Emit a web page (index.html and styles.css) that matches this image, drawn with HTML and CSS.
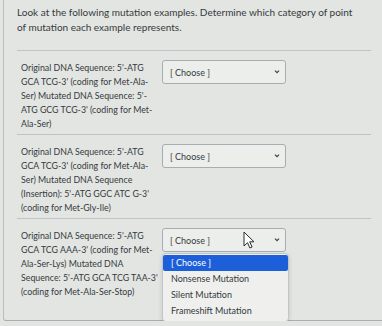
FILE: index.html
```html
<!DOCTYPE html>
<html lang="en">
<head>
  <meta charset="UTF-8" />
  <title>Quiz question</title>
  <meta name="viewport" content="width=device-width, initial-scale=1.0" />
  <link rel="stylesheet" href="styles.css">
</head>
<body>

  <div class="quiz">
    <p class="prompt">Look at the following mutation examples. Determine which category of point of mutation each example represents.</p>

    <div class="row">
      <div class="stem">Original DNA Sequence: 5'-ATG GCA TCG-3' (coding for Met-Ala-Ser) Mutated DNA Sequence: 5'-ATG GCG TCG-3' (coding for Met-Ala-Ser)</div>
      <div class="pick">
        <div class="select">[ Choose ]
          <svg class="chev" viewBox="0 0 8 6" width="7" height="5"><path d="M1 1l3 3 3-3" fill="none" stroke="#3b4046" stroke-width="1.8"/></svg>
        </div>
      </div>
    </div>

    <div class="row">
      <div class="stem">Original DNA Sequence: 5'-ATG GCA TCG-3' (coding for Met-Ala-Ser) Mutated DNA Sequence (Insertion): 5'-ATG GGC ATC G-3' (coding for Met-Gly-Ile)</div>
      <div class="pick">
        <div class="select">[ Choose ]
          <svg class="chev" viewBox="0 0 8 6" width="7" height="5"><path d="M1 1l3 3 3-3" fill="none" stroke="#3b4046" stroke-width="1.8"/></svg>
        </div>
      </div>
    </div>

    <div class="row last">
      <div class="stem">Original DNA Sequence: 5'-ATG GCA TCG AAA-3' (coding for Met-Ala-Ser-Lys) Mutated DNA Sequence: 5'-ATG GCA TCG TAA-3' (coding for Met-Ala-Ser-Stop)</div>
      <div class="pick">
        <div class="select open">[ Choose ]
          <svg class="chev" viewBox="0 0 8 6" width="7" height="5"><path d="M1 1l3 3 3-3" fill="none" stroke="#3b4046" stroke-width="1.8"/></svg>
        </div>
        <ul class="menu">
          <li class="active">[ Choose ]</li>
          <li>Nonsense Mutation</li>
          <li>Silent Mutation</li>
          <li>Frameshift Mutation</li>
        </ul>
        <svg class="cursor" viewBox="0 0 12 18" width="12" height="18">
          <path d="M1 1v14l3.5-3.3 2.4 5.3 2.2-1-2.4-5.2H11z" fill="#fff" stroke="#2a2d31" stroke-width="1" stroke-linejoin="round"/>
        </svg>
      </div>
    </div>
  </div>

</body>
</html>
```

FILE: styles.css
```css
body {
  margin: 0;
  background-color: #e3e5e2;
  color: #343a40;
  font-family: Lato, "Open Sans", sans-serif;
}

.quiz {
  margin-left: 3px;
  height: 321px;
  box-sizing: border-box;
  border-left: 1px solid #b9bdc2;
  border-bottom: 1px solid #a9aeb6;
  border-bottom-left-radius: 3px;
  padding: 0 11px 0 13px;
}

.prompt {
  margin: 0;
  padding: 5px 13px 15px 0;
  font-size: 10px;
  line-height: 15px;
  border-bottom: 1px solid #bfc3c9;
}

.row {
  display: flex;
  gap: 4px;
  padding: 10px 0 3px 4px;
  border-bottom: 1px solid #bfc3c9;
}

.row.last {
  border-bottom: none;
}

.stem {
  width: 137px;
  flex-shrink: 0;
  font-size: 8.8px;
  line-height: 14px;
}

.pick {
  position: relative;
}

.select {
  display: flex;
  align-items: center;
  justify-content: space-between;
  width: 124px;
  height: 24px;
  margin-top: -1px;
  box-sizing: border-box;
  padding: 0 5px 0 7px;
  background: #eceeeb;
  border: 1px solid #a8adb4;
  border-radius: 3px;
  font-size: 9px;
}

.chev {
  width: 6px;
  height: 4px;
}

.menu {
  position: absolute;
  top: 24px;
  left: 0;
  width: 125px;
  margin: 0;
  padding: 1px 0 2px;
  list-style: none;
  background: #eff0ee;
  border: 1px solid #c2c6cb;
  border-radius: 4px;
  box-shadow: 0 2px 4px rgba(0, 0, 0, 0.15);
  font-size: 9px;
  z-index: 2;
}

.menu li {
  height: 16px;
  line-height: 16px;
  padding-left: 8px;
}

.menu li.active {
  background: #1d5fd8;
  color: #fff;
  border-radius: 2px;
}

.cursor {
  position: absolute;
  top: 2px;
  left: 81px;
}
```
